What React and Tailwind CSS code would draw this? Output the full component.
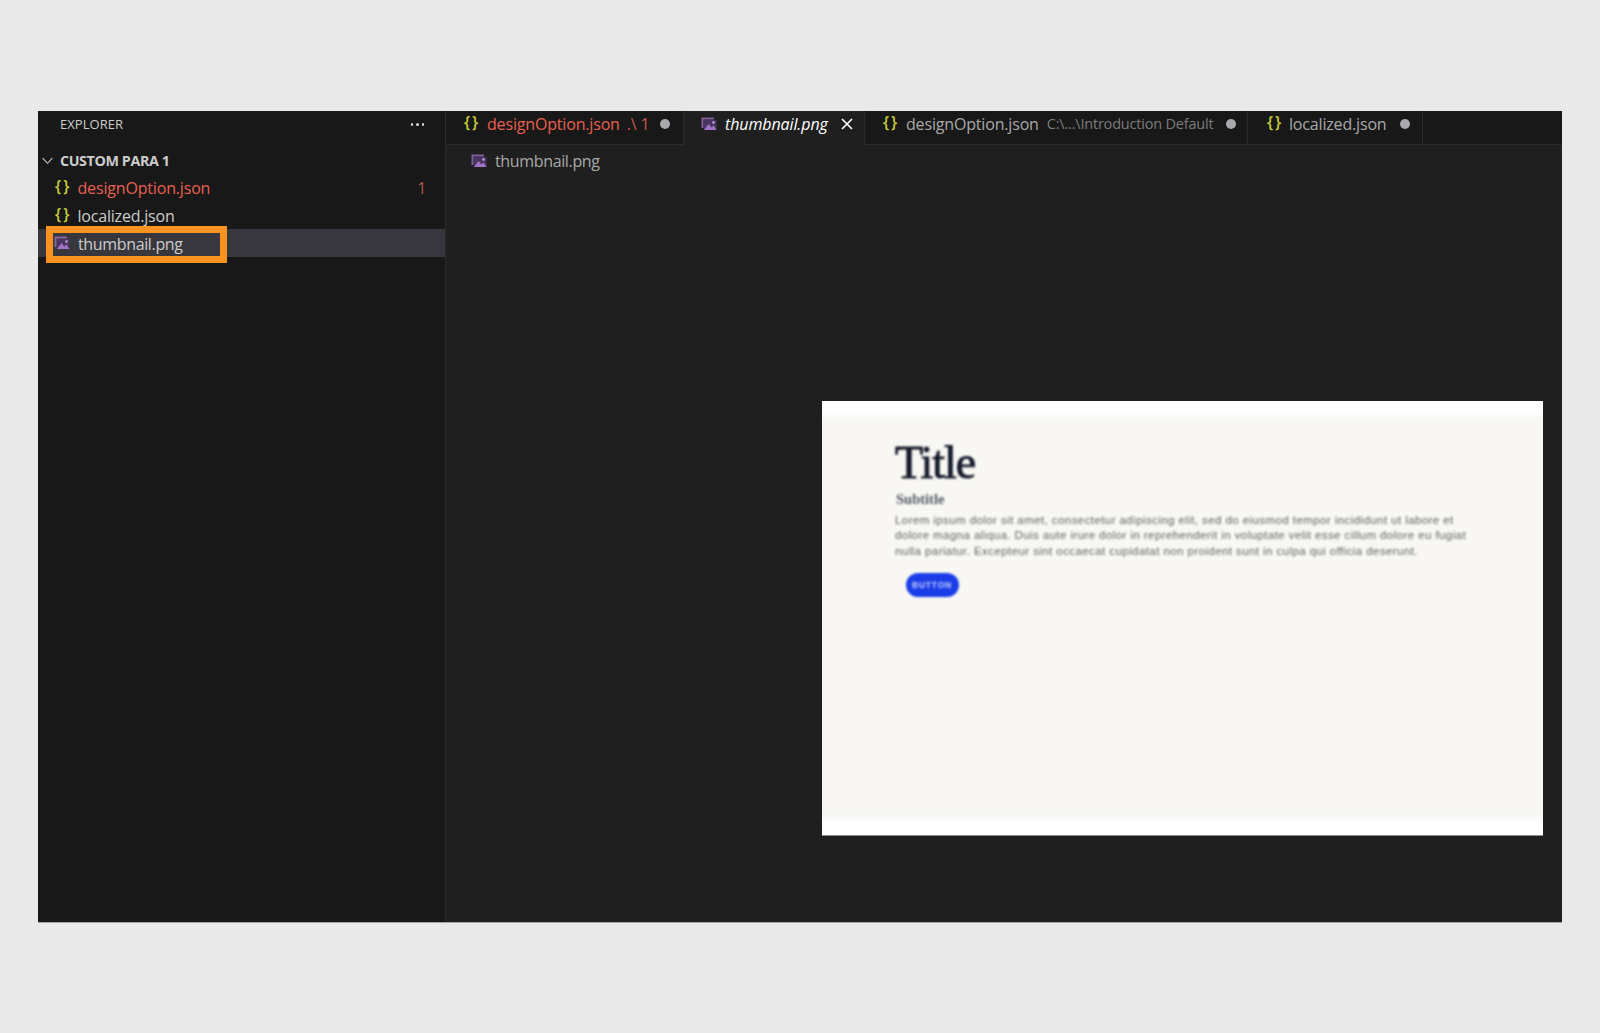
const font = { fontFamily: '"Open Sans", "Noto Sans", sans-serif' };

function Braces({ className = "" }) {
  return (
    <span className={`flex w-[14px] shrink-0 justify-between pb-[3px] text-[16px] font-semibold leading-none text-[#c8cc3c] ${className}`}>
      <span>{"{"}</span>
      <span>{"}"}</span>
    </span>
  );
}

function ImageIcon({ className = "" }) {
  return (
    <svg viewBox="0 0 16 14" className={`h-[14px] w-[16px] shrink-0 ${className}`}>
      <path d="M0.5 0.5h12.5v2h-10.5v8.5h-2z" fill="#a074c4" opacity="0.75" />
      <rect x="3" y="3" width="12.5" height="10" fill="#4a3560" />
      <path d="M3 13l4.5-6 3 3.5 2-2 3 4.500z" fill="#a074c4" />
      <circle cx="12.500" cy="5.500" r="1.200" fill="#c9a8e4" />
    </svg>
  );
}

function Dot({ className = "" }) {
  return <span className={`block h-[10px] w-[10px] shrink-0 rounded-full bg-[#a8a8ad] ${className}`} />;
}

function Tab({ width, pl, active, children }) {
  return (
    <div
      className={`flex h-[34px] shrink-0 items-center border-r border-[#2b2b2b] pb-[8px] ${active ? "bg-[#1f1f1f]" : "border-b bg-[#181818]"} ${width} ${pl}`}
    >
      {children}
    </div>
  );
}

function Row({ selected, icon, children }) {
  return (
    <div className={`flex h-[28px] items-center pl-[16px] pt-[2px] ${selected ? "bg-[#37373d]" : ""}`}>
      {icon}
      {children}
    </div>
  );
}

export default function App() {
  return (
    <div className="h-[1033px] w-[1600px] overflow-hidden bg-[#e9e9e9] pl-[38px] pt-[111px]" style={font}>
      <div className="flex h-[812px] w-[1524px] border-b border-[#a5a5a5] bg-[#1f1f1f]">
        {/* Sidebar */}
        <aside className="relative flex w-[408px] shrink-0 flex-col border-r border-[#2b2b2b] bg-[#181818] text-[#cccccc]">
          <div className="flex h-[27px] items-center justify-between pl-[22px] pr-[21px] text-[13px] tracking-[0.05px]">
            <span>EXPLORER</span>
            <span className="flex gap-[3px]">
              <span className="h-[2.500px] w-[2.500px] rounded-full bg-[#d8d8d8]" />
              <span className="h-[2.500px] w-[2.500px] rounded-full bg-[#d8d8d8]" />
              <span className="h-[2.500px] w-[2.500px] rounded-full bg-[#d8d8d8]" />
            </span>
          </div>
          <div className="mt-[10px] flex h-[25px] items-center pl-[4px] text-[14.300px] font-bold tracking-[-0.4px]">
            <svg viewBox="0 0 12 8" className="mr-[7px] h-[8px] w-[11px]" fill="none" stroke="#c8c8c8" strokeWidth="1.200">
              <path d="M0.700 0.800L6 6.500L11.300 0.800" />
            </svg>
            CUSTOM PARA 1
          </div>
          <div className="text-[16px] tracking-[-0.35px]">
            <Row icon={<Braces className="mb-[2px] ml-[1px] mr-[8.500px]" />}>
              <span className="tracking-[-0.17px] text-[#e8604f]">designOption.json</span>
              <span className="ml-auto mr-[19px] text-[16px] text-[#b5574b]">1</span>
            </Row>
            <Row icon={<Braces className="mb-[2px] ml-[1px] mr-[8.500px]" />}>
              <span className="tracking-[-0.2px]">localized.json</span>
            </Row>
            <Row selected icon={<ImageIcon className="mb-[2px] mr-[8px]" />}>
              <span>thumbnail.png</span>
            </Row>
          </div>
          <div className="absolute left-[8px] top-[115px] h-[37px] w-[181px] border-[7px] border-[#f7931e]" />
        </aside>

        {/* Editor */}
        <main className="flex min-w-0 flex-1 flex-col">
          <div className="flex h-[34px] shrink-0 bg-[#181818] text-[16px] tracking-[-0.17px]">
            <Tab width="w-[238px]" pl="pl-[18px]">
              <Braces />
              <span className="ml-[9px] text-[#e8604f]">designOption.json</span>
              <span className="ml-[7px] text-[16px] text-[#c9574a]">.\ 1</span>
              <Dot className="ml-[11px]" />
            </Tab>
            <Tab active width="w-[181px]" pl="pl-[17px]">
              <ImageIcon />
              <span className="ml-[8px] italic tracking-[-0.1px] text-white">thumbnail.png</span>
              <svg viewBox="0 0 12 12" className="ml-[13px] h-[12px] w-[12px]" stroke="#ffffff" strokeWidth="1.600">
                <path d="M1 1l10 10M11 1L1 11" />
              </svg>
            </Tab>
            <Tab width="w-[383px]" pl="pl-[18px]">
              <Braces />
              <span className="ml-[9px] text-[#a9a9a9]">designOption.json</span>
              <span className="ml-[8px] text-[14.500px] tracking-[-0.2px] text-[#7c7c7c]">C:\...\Introduction Default</span>
              <Dot className="ml-[13px]" />
            </Tab>
            <Tab width="w-[175px]" pl="pl-[19px]">
              <Braces />
              <span className="ml-[8px] text-[#a9a9a9]">localized.json</span>
              <Dot className="ml-[13px]" />
            </Tab>
            <div className="flex-1 border-b border-[#2b2b2b]" />
          </div>

          <div className="flex h-[31px] shrink-0 items-center pl-[25px] text-[16px] tracking-[-0.35px] text-[#a9a9a9]">
            <ImageIcon />
            <span className="ml-[8px]">thumbnail.png</span>
          </div>

          {/* Thumbnail preview */}
          <div className="ml-[376px] mt-[225px] h-[435px] w-[721px] border-b border-[#888888] bg-[linear-gradient(to_bottom,#ffffff_10px,#f8f7f3_18px,#f8f7f3_414px,#ffffff_422px)] pl-[73px] pt-[38px]">
            <div className="blur-[0.8px]">
              <h1 className="text-[46px] font-normal leading-[48px] tracking-[-1px] text-[#141829] [-webkit-text-stroke:0.9px_#141829]" style={{ fontFamily: '"Liberation Serif", serif' }}>
                Title
              </h1>
              <p className="ml-[1px] mt-[4px] text-[14.500px] font-bold leading-[16px] text-[#555a68]" style={{ fontFamily: '"Liberation Serif", serif' }}>
                Subtitle
              </p>
              <p className="mt-[6px] w-[620px] text-[11.500px] leading-[15.400px] tracking-[0.42px] text-[#626266] blur-[0.4px]" style={{ fontFamily: '"Liberation Sans", sans-serif' }}>
                Lorem ipsum dolor sit amet, consectetur adipiscing elit, sed do eiusmod tempor incididunt ut labore et<br />
                dolore magna aliqua. Duis aute irure dolor in reprehenderit in voluptate velit esse cillum dolore eu fugiat<br />
                nulla pariatur. Excepteur sint occaecat cupidatat non proident sunt in culpa qui officia deserunt.
              </p>
              <div
                className="ml-[10.500px] mt-[14px] flex h-[24px] w-[53px] items-center justify-center rounded-full bg-[#1a3de8] text-[8.500px] font-bold tracking-[0.8px] text-[#c8d2ff]"
                style={{ fontFamily: '"Liberation Sans", sans-serif' }}
              >
                BUTTON
              </div>
            </div>
          </div>
        </main>
      </div>
    </div>
  );
}
